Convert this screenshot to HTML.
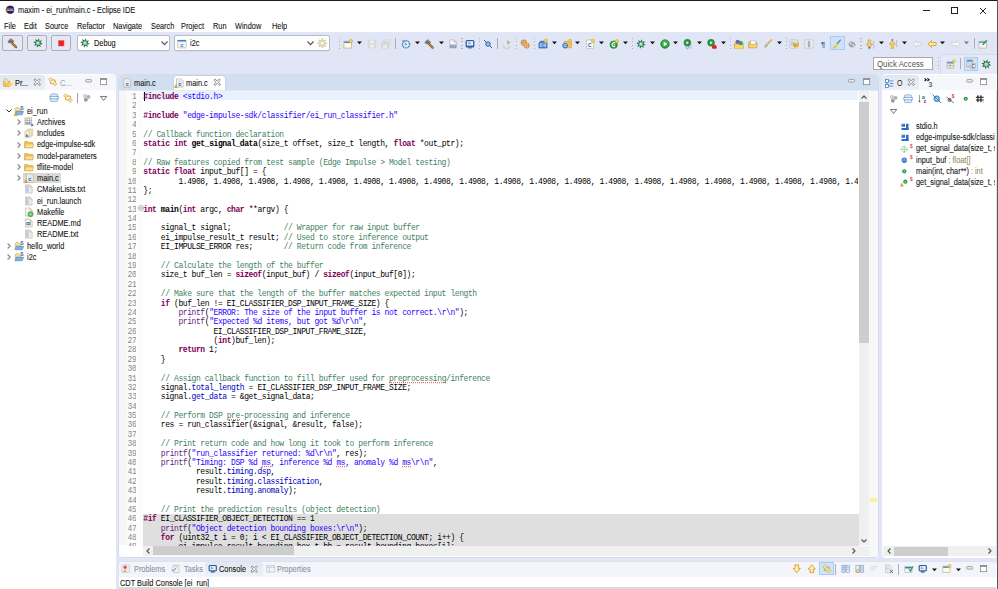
<!DOCTYPE html>
<html><head><meta charset="utf-8">
<style>
*{box-sizing:border-box}
html,body{margin:0;padding:0}
body{width:998px;height:589px;overflow:hidden;position:relative;background:#e1e6f6;font-family:"Liberation Sans",sans-serif;color:#000}
.a{position:absolute}
svg.a{overflow:visible}
.t{white-space:nowrap;line-height:10px;height:10px;-webkit-text-stroke:0.08px currentColor;transform:scaleX(0.88);transform-origin:0 0}
#code{left:143.3px;top:92.1px;width:715px;height:453.5px;overflow:hidden}
.ln{position:absolute;left:0;height:9.383px;line-height:9.383px;white-space:pre;font-family:"Liberation Mono",monospace;font-size:8px;letter-spacing:-0.414px;color:#000;transform:scaleY(1.1);transform-origin:0 7px}
.nm{position:absolute;right:0;width:20px;text-align:right;height:9.383px;line-height:9.383px;font-family:"Liberation Mono",monospace;font-size:8px;letter-spacing:-0.414px;color:#8a8a8a;transform:scaleY(1.1);transform-origin:0 7px}
#nums{left:115.3px;top:92.1px;width:21px;height:453.5px;overflow:hidden}
b.k{color:#7f0055;font-weight:bold}
b.d{font-weight:bold}
i.c{color:#3f7f5f;font-style:normal}
.s{color:#2a00ff}
.f{color:#0000c0}
.m{color:#642880}
u{text-decoration:none;background:repeating-linear-gradient(90deg,#e86060 0 1px,transparent 1px 2px) 0 100%/100% 1px no-repeat}
</style></head><body>
<div class="a" style="left:0px;top:0px;width:998px;height:1px;background:#1e1e1e"></div>
<div class="a" style="left:0px;top:1px;width:997px;height:30.5px;background:#fff"></div>
<div class="a" style="left:0px;top:74px;width:116px;height:515px;background:#fff;border-radius:0 4px 0 0"></div>
<div class="a" style="left:0px;top:74.5px;width:116px;height:15.5px;background:#f5f7fb;border-radius:0 4px 0 0"></div>
<div class="a" style="left:0px;top:74.5px;width:45px;height:15.5px;background:linear-gradient(#e1e8f0,#edf1f6);border-radius:0 4px 0 0"></div>
<svg class="a" style="left:2.50px;top:77.00px;" width="10.00" height="10.00" viewBox="0 0 16 16"><path d="M1 7H11V15H1Z" fill="#f5c84a" stroke="#c48f1c" stroke-width="0.8"/><path d="M0.5 5L3 2L8 4.5L9 9L5 12Z" fill="#f3d8a8" stroke="#b89050" stroke-width="0.5"/><path d="M7 14L10 10H15.5L14 14Z" fill="#ffd45a"/></svg>
<div class="a t" style="left:15px;top:77.59px;font-size:8.4px;color:#111;">Pr...</div>
<svg class="a" style="left:33.80px;top:78.80px;" width="6.40" height="6.40" viewBox="0 0 8 8"><path d="M1.3 1.3L6.7 6.7M6.7 1.3L1.3 6.7" stroke="#7a7a7a" stroke-width="2.7" stroke-linecap="square"/><path d="M1.3 1.3L6.7 6.7M6.7 1.3L1.3 6.7" stroke="#fcfcfc" stroke-width="1.3" stroke-linecap="square"/></svg>
<svg class="a" style="left:47.75px;top:77.25px;" width="9.50" height="9.50" viewBox="0 0 16 16"><path d="M5 5H12V9M11 11H4V7" stroke="#d9a235" stroke-width="1.6" fill="none"/><path d="M4.5 1L8 4.5L4.5 8L1 4.5Z" fill="#fbe3a0" stroke="#d49a2a" stroke-width="1"/><path d="M11.5 8L15 11.5L11.5 15L8 11.5Z" fill="#fbe3a0" stroke="#d49a2a" stroke-width="1"/></svg>
<div class="a t" style="left:60px;top:77.59px;font-size:8.4px;color:#a4abb8;">C...</div>
<svg class="a" style="left:84.90px;top:78.70px;" width="7.20" height="3.60" viewBox="0 0 8 4"><rect x="0.5" y="0.5" width="7" height="3" rx="1.5" fill="#e9e9e9" stroke="#8a8a8a" stroke-width="0.8"/></svg>
<svg class="a" style="left:99.90px;top:77.60px;" width="7.20" height="7.20" viewBox="0 0 8 8"><rect x="0.6" y="0.6" width="6.8" height="6.8" fill="#fff" stroke="#8a8a8a" stroke-width="0.9"/><rect x="0.6" y="0.6" width="6.8" height="1.5" fill="#8a8a8a"/></svg>
<svg class="a" style="left:48.75px;top:93.25px;" width="9.50" height="9.50" viewBox="0 0 16 16"><rect x="2.5" y="1.5" width="12" height="13" rx="2" fill="#dbe7f6" stroke="#6f9bd0" stroke-width="1.1"/><rect x="1.5" y="6.2" width="14" height="3.6" fill="#fff" stroke="#4f86c8" stroke-width="1"/></svg>
<svg class="a" style="left:63.00px;top:93.00px;" width="10.00" height="10.00" viewBox="0 0 16 16"><path d="M5 5H12V9M11 11H4V7" stroke="#d9a235" stroke-width="1.6" fill="none"/><path d="M4.5 1L8 4.5L4.5 8L1 4.5Z" fill="#fbe3a0" stroke="#d49a2a" stroke-width="1"/><path d="M11.5 8L15 11.5L11.5 15L8 11.5Z" fill="#fbe3a0" stroke="#d49a2a" stroke-width="1"/></svg>
<div class="a" style="left:76.5px;top:92.5px;width:1px;height:10px;background:#9aa0aa"></div>
<svg class="a" style="left:82.25px;top:93.25px;" width="9.50" height="9.50" viewBox="0 0 16 16"><circle cx="5" cy="5" r="3.3" fill="#c4c4c4"/><circle cx="11" cy="6.5" r="3.3" fill="#b0b0b0"/><circle cx="6.5" cy="11.5" r="3.3" fill="#9c9c9c"/><circle cx="4.5" cy="4.5" r="1.2" fill="#e8e8e8"/></svg>
<svg class="a" style="left:99.90px;top:95.80px;" width="7.20" height="5.40" viewBox="0 0 8 6"><path d="M0.5 0.5H7.5L4 5Z" fill="#fff" stroke="#555" stroke-width="0.9"/></svg>
<svg class="a" style="left:5.5px;top:108.90px" width="6" height="4" viewBox="0 0 6 4"><path d="M0.5 0.5L3 3L5.5 0.5" stroke="#333" stroke-width="1" fill="none"/></svg>
<svg class="a" style="left:13.80px;top:105.70px;" width="10.00" height="10.00" viewBox="0 0 16 16"><path d="M2 4.5C2 3 3 2.5 4.5 2.5H7L8.5 4H11V10H2Z" fill="#f6dc8e" stroke="#c9a040" stroke-width="0.8"/><path d="M1.5 14L3.5 8.5H15.5L13 14Z" fill="#7fb0ea" stroke="#3a70c0" stroke-width="0.8"/><text x="12.5" y="6.5" font-family="Liberation Sans" font-weight="bold" font-size="8" fill="#2a6ab8" text-anchor="middle">S</text><path d="M0.3 15.7L2.8 10.5L5.3 15.7Z" fill="#eab020" stroke="#b07810" stroke-width="0.5"/></svg>
<div class="a t" style="left:26.6px;top:105.59px;font-size:8.4px;color:#111;">ei_run</div>
<svg class="a" style="left:17.00px;top:119.15px" width="4" height="6" viewBox="0 0 4 6"><path d="M0.6 0.5L3.2 3L0.6 5.5" stroke="#8a8a8a" stroke-width="1.15" fill="none"/></svg>
<svg class="a" style="left:24.30px;top:116.95px;" width="10.00" height="10.00" viewBox="0 0 16 16"><rect x="1.5" y="1.5" width="11" height="11" fill="#f0f0f0" stroke="#b09a70" stroke-width="0.8"/><path d="M1.5 5.5H12.5M1.5 9H12.5M5 1.5V12.5M8.8 1.5V12.5" stroke="#8a8a8a" stroke-width="0.8"/><path d="M2 10H12" stroke="#6b90c8" stroke-width="1.4"/><rect x="11" y="11" width="4" height="4" fill="#4f86d0" stroke="#fff" stroke-width="0.6"/></svg>
<div class="a t" style="left:37.1px;top:116.84px;font-size:8.4px;color:#111;">Archives</div>
<svg class="a" style="left:17.00px;top:130.40px" width="4" height="6" viewBox="0 0 4 6"><path d="M0.6 0.5L3.2 3L0.6 5.5" stroke="#8a8a8a" stroke-width="1.15" fill="none"/></svg>
<svg class="a" style="left:24.30px;top:128.20px;" width="10.00" height="10.00" viewBox="0 0 16 16"><rect x="7" y="1.5" width="7" height="11" rx="1" fill="#f6f0e0" stroke="#c9a860" stroke-width="0.8"/><rect x="4.5" y="3" width="7" height="11" rx="1" fill="#f6f0e0" stroke="#c9a860" stroke-width="0.8"/><rect x="1.5" y="4.5" width="7" height="11" rx="1" fill="#f6f0e0" stroke="#c9a860" stroke-width="0.8"/><path d="M2.5 14L4 9L7.5 14Z" fill="#3a6ab0"/></svg>
<div class="a t" style="left:37.1px;top:128.09px;font-size:8.4px;color:#111;">Includes</div>
<svg class="a" style="left:17.00px;top:141.65px" width="4" height="6" viewBox="0 0 4 6"><path d="M0.6 0.5L3.2 3L0.6 5.5" stroke="#8a8a8a" stroke-width="1.15" fill="none"/></svg>
<svg class="a" style="left:24.30px;top:139.45px;" width="10.00" height="10.00" viewBox="0 0 16 16"><path d="M1 4H6L7 5.5H14V14H1Z" fill="#f0c460" stroke="#c48f1c" stroke-width="0.8"/><path d="M1 14L3 8H15.5L13.5 14Z" fill="#fbe09a" stroke="#c48f1c" stroke-width="0.6"/></svg>
<div class="a t" style="left:37.1px;top:139.34px;font-size:8.4px;color:#111;">edge-impulse-sdk</div>
<svg class="a" style="left:17.00px;top:152.90px" width="4" height="6" viewBox="0 0 4 6"><path d="M0.6 0.5L3.2 3L0.6 5.5" stroke="#8a8a8a" stroke-width="1.15" fill="none"/></svg>
<svg class="a" style="left:24.30px;top:150.70px;" width="10.00" height="10.00" viewBox="0 0 16 16"><path d="M1 4H6L7 5.5H14V14H1Z" fill="#f0c460" stroke="#c48f1c" stroke-width="0.8"/><path d="M1 14L3 8H15.5L13.5 14Z" fill="#fbe09a" stroke="#c48f1c" stroke-width="0.6"/></svg>
<div class="a t" style="left:37.1px;top:150.59px;font-size:8.4px;color:#111;">model-parameters</div>
<svg class="a" style="left:17.00px;top:164.15px" width="4" height="6" viewBox="0 0 4 6"><path d="M0.6 0.5L3.2 3L0.6 5.5" stroke="#8a8a8a" stroke-width="1.15" fill="none"/></svg>
<svg class="a" style="left:24.30px;top:161.95px;" width="10.00" height="10.00" viewBox="0 0 16 16"><path d="M1 4H6L7 5.5H14V14H1Z" fill="#f0c460" stroke="#c48f1c" stroke-width="0.8"/><path d="M1 14L3 8H15.5L13.5 14Z" fill="#fbe09a" stroke="#c48f1c" stroke-width="0.6"/></svg>
<div class="a t" style="left:37.1px;top:161.84px;font-size:8.4px;color:#111;">tflite-model</div>
<div class="a" style="left:22.6px;top:172.8px;width:38.3px;height:10.5px;background:#d9d9d9"></div>
<svg class="a" style="left:17.00px;top:175.40px" width="4" height="6" viewBox="0 0 4 6"><path d="M0.6 0.5L3.2 3L0.6 5.5" stroke="#8a8a8a" stroke-width="1.15" fill="none"/></svg>
<svg class="a" style="left:24.30px;top:173.20px;" width="10.00" height="10.00" viewBox="0 0 16 16"><path d="M4 1.5H11.5L14.5 4.5V14.5H4Z" fill="#fff" stroke="#b9a06a" stroke-width="1"/><path d="M6 3H13V13H6Z" fill="#dfe9f5"/><text x="9.3" y="12" font-family="Liberation Sans" font-weight="bold" font-size="9" fill="#2a52b8" text-anchor="middle">c</text><path d="M0.5 15.5L3 10.5L5.5 15.5Z" fill="#e8a920" stroke="#b07810" stroke-width="0.5"/></svg>
<div class="a t" style="left:37.1px;top:173.09px;font-size:8.4px;color:#111;">main.c</div>
<svg class="a" style="left:24.30px;top:184.45px;" width="10.00" height="10.00" viewBox="0 0 16 16"><path d="M2.5 1.5H9.5L13 5V14.5H2.5Z" fill="#e9eff8" stroke="#b9a884" stroke-width="0.9"/><rect x="3.2" y="2.2" width="4.5" height="11.6" fill="#bccfe9"/><path d="M9.5 1.5V5H13" fill="#f3e2b0" stroke="#c9a860" stroke-width="0.7"/></svg>
<div class="a t" style="left:37.1px;top:184.34px;font-size:8.4px;color:#111;">CMakeLists.txt</div>
<svg class="a" style="left:24.30px;top:195.70px;" width="10.00" height="10.00" viewBox="0 0 16 16"><path d="M2.5 1.5H9.5L13 5V14.5H2.5Z" fill="#e9eff8" stroke="#b9a884" stroke-width="0.9"/><rect x="3.2" y="2.2" width="4.5" height="11.6" fill="#bccfe9"/><path d="M9.5 1.5V5H13" fill="#f3e2b0" stroke="#c9a860" stroke-width="0.7"/></svg>
<div class="a t" style="left:37.1px;top:195.59px;font-size:8.4px;color:#111;">ei_run.launch</div>
<svg class="a" style="left:24.30px;top:206.95px;" width="10.00" height="10.00" viewBox="0 0 16 16"><path d="M2.5 1.5H9.5L13 5V14.5H2.5Z" fill="#f4f6fa" stroke="#b9a884" stroke-width="0.9"/><path d="M9.5 1.5V5H13" fill="#f3e2b0" stroke="#c9a860" stroke-width="0.7"/><circle cx="10.5" cy="11.5" r="4.3" fill="#5cb877" stroke="#3a9050" stroke-width="0.6"/><circle cx="10.5" cy="11.5" r="1.6" fill="#b8e4c4"/></svg>
<div class="a t" style="left:37.1px;top:206.84px;font-size:8.4px;color:#111;">Makefile</div>
<svg class="a" style="left:24.30px;top:218.20px;" width="10.00" height="10.00" viewBox="0 0 16 16"><path d="M2.5 1.5H9.5L13 5V14.5H2.5Z" fill="#f6f6f0" stroke="#b9a070" stroke-width="0.9"/><path d="M9.5 1.5V5H13" fill="#f3e2b0" stroke="#c9a860" stroke-width="0.7"/><rect x="4" y="6.5" width="6.5" height="5" fill="#4f7fc0"/><path d="M5 8L6.5 10L8 8L9.5 10" stroke="#dce8f6" stroke-width="0.8" fill="none"/></svg>
<div class="a t" style="left:37.1px;top:218.09px;font-size:8.4px;color:#111;">README.md</div>
<svg class="a" style="left:24.30px;top:229.45px;" width="10.00" height="10.00" viewBox="0 0 16 16"><path d="M2.5 1.5H9.5L13 5V14.5H2.5Z" fill="#e9eff8" stroke="#b9a884" stroke-width="0.9"/><rect x="3.2" y="2.2" width="4.5" height="11.6" fill="#bccfe9"/><path d="M9.5 1.5V5H13" fill="#f3e2b0" stroke="#c9a860" stroke-width="0.7"/></svg>
<div class="a t" style="left:37.1px;top:229.34px;font-size:8.4px;color:#111;">README.txt</div>
<svg class="a" style="left:6.50px;top:242.90px" width="4" height="6" viewBox="0 0 4 6"><path d="M0.6 0.5L3.2 3L0.6 5.5" stroke="#8a8a8a" stroke-width="1.15" fill="none"/></svg>
<svg class="a" style="left:13.80px;top:240.70px;" width="10.00" height="10.00" viewBox="0 0 16 16"><path d="M2 4.5C2 3 3 2.5 4.5 2.5H7L8.5 4H11V10H2Z" fill="#f6dc8e" stroke="#c9a040" stroke-width="0.8"/><path d="M1.5 14L3.5 8.5H15.5L13 14Z" fill="#7fb0ea" stroke="#3a70c0" stroke-width="0.8"/><text x="12.5" y="6.5" font-family="Liberation Sans" font-weight="bold" font-size="8" fill="#2a6ab8" text-anchor="middle">S</text></svg>
<div class="a t" style="left:26.6px;top:240.59px;font-size:8.4px;color:#111;">hello_world</div>
<svg class="a" style="left:6.50px;top:254.15px" width="4" height="6" viewBox="0 0 4 6"><path d="M0.6 0.5L3.2 3L0.6 5.5" stroke="#8a8a8a" stroke-width="1.15" fill="none"/></svg>
<svg class="a" style="left:13.80px;top:251.95px;" width="10.00" height="10.00" viewBox="0 0 16 16"><path d="M2 4.5C2 3 3 2.5 4.5 2.5H7L8.5 4H11V10H2Z" fill="#f6dc8e" stroke="#c9a040" stroke-width="0.8"/><path d="M1.5 14L3.5 8.5H15.5L13 14Z" fill="#7fb0ea" stroke="#3a70c0" stroke-width="0.8"/><text x="12.5" y="6.5" font-family="Liberation Sans" font-weight="bold" font-size="8" fill="#2a6ab8" text-anchor="middle">S</text></svg>
<div class="a t" style="left:26.6px;top:251.84px;font-size:8.4px;color:#111;">i2c</div>
<div class="a" style="left:118px;top:74px;width:761px;height:484px;background:#fff;border:1px solid #d6dce9;border-radius:4px"></div>
<div class="a" style="left:119px;top:75px;width:759px;height:15px;background:#d1dff0;border-radius:3px 3px 0 0"></div>
<div class="a" style="left:173px;top:74.5px;width:52.5px;height:15.5px;background:#fff;border-radius:4px 4px 0 0;border:1px solid #c9d3e6;border-bottom:none"></div>
<svg class="a" style="left:121.50px;top:77.50px;" width="10.00" height="10.00" viewBox="0 0 16 16"><path d="M3 1.5H10.5L13.5 4.5V14.5H3Z" fill="#fff" stroke="#b9a06a" stroke-width="1"/><path d="M5 3H12V13H5Z" fill="#dfe9f5"/><text x="8.3" y="12" font-family="Liberation Sans" font-weight="bold" font-size="9" fill="#2a52b8" text-anchor="middle">c</text></svg>
<div class="a t" style="left:133.6px;top:77.89px;font-size:8.4px;color:#111;">main.c</div>
<svg class="a" style="left:174.00px;top:77.50px;" width="10.00" height="10.00" viewBox="0 0 16 16"><path d="M4 1.5H11.5L14.5 4.5V14.5H4Z" fill="#fff" stroke="#b9a06a" stroke-width="1"/><path d="M6 3H13V13H6Z" fill="#dfe9f5"/><text x="9.3" y="12" font-family="Liberation Sans" font-weight="bold" font-size="9" fill="#2a52b8" text-anchor="middle">c</text><path d="M0.5 15.5L3 10.5L5.5 15.5Z" fill="#e8a920" stroke="#b07810" stroke-width="0.5"/></svg>
<div class="a t" style="left:186.4px;top:77.89px;font-size:8.4px;color:#111;">main.c</div>
<svg class="a" style="left:214.10px;top:79.30px;" width="6.40" height="6.40" viewBox="0 0 8 8"><path d="M1.3 1.3L6.7 6.7M6.7 1.3L1.3 6.7" stroke="#7a7a7a" stroke-width="2.7" stroke-linecap="square"/><path d="M1.3 1.3L6.7 6.7M6.7 1.3L1.3 6.7" stroke="#fcfcfc" stroke-width="1.3" stroke-linecap="square"/></svg>
<svg class="a" style="left:848.40px;top:78.70px;" width="7.20" height="3.60" viewBox="0 0 8 4"><rect x="0.5" y="0.5" width="7" height="3" rx="1.5" fill="#e9e9e9" stroke="#8a8a8a" stroke-width="0.8"/></svg>
<svg class="a" style="left:862.80px;top:77.60px;" width="7.20" height="7.20" viewBox="0 0 8 8"><rect x="0.6" y="0.6" width="6.8" height="6.8" fill="#fff" stroke="#8a8a8a" stroke-width="0.9"/><rect x="0.6" y="0.6" width="6.8" height="1.5" fill="#8a8a8a"/></svg>
<div class="a" style="left:119px;top:90px;width:759px;height:1px;background:#e4e9f2"></div>
<div class="a" style="left:119px;top:91px;width:8px;height:454px;background:#f6f6f6"></div>
<div class="a" style="left:127px;top:91px;width:15.5px;height:454px;background:#fcfcfc"></div>
<div class="a" style="left:143px;top:91.3px;width:715px;height:9px;background:#e8f2fe"></div>
<div class="a" style="left:143px;top:513.5px;width:715.5px;height:32px;background:#dfdfdf"></div>
<div class="a" style="left:859px;top:91px;width:10px;height:454px;background:#f0f0f0"></div>
<div class="a" style="left:859px;top:102px;width:10px;height:241px;background:#cdcdcd"></div>
<svg class="a" style="left:861px;top:95px" width="6" height="4" viewBox="0 0 6 4"><path d="M0.5 3.5L3 1L5.5 3.5" stroke="#505050" stroke-width="1.1" fill="none"/></svg>
<svg class="a" style="left:861px;top:538.5px" width="6" height="4" viewBox="0 0 6 4"><path d="M0.5 0.5L3 3L5.5 0.5" stroke="#505050" stroke-width="1.1" fill="none"/></svg>
<div class="a" style="left:869px;top:91px;width:9px;height:466px;background:#f8f8f8"></div>
<div class="a" style="left:870px;top:498.3px;width:6.5px;height:3.4px;background:#f6f19a"></div>
<div class="a" style="left:143px;top:545.5px;width:726px;height:10px;background:#f0f0f0"></div>
<div class="a" style="left:153px;top:546px;width:141px;height:9px;background:#cdcdcd"></div>
<svg class="a" style="left:145.5px;top:548px" width="4" height="6" viewBox="0 0 4 6"><path d="M3.5 0.5L1 3L3.5 5.5" stroke="#505050" stroke-width="1.1" fill="none"/></svg>
<svg class="a" style="left:851.5px;top:548px" width="4" height="6" viewBox="0 0 4 6"><path d="M0.5 0.5L3 3L0.5 5.5" stroke="#505050" stroke-width="1.1" fill="none"/></svg>
<div class="a" style="left:144px;top:91.6px;width:1px;height:9px;background:#000"></div>
<svg class="a" style="left:137.5px;top:205px" width="6" height="6" viewBox="0 0 6 6"><circle cx="3" cy="3" r="2.5" fill="#fff" stroke="#8a9ab0" stroke-width="0.7"/><path d="M1.5 3H4.5" stroke="#555" stroke-width="0.7"/></svg>
<div class="a" id="nums">
<div class=nm style="top:0.00px">1</div>
<div class=nm style="top:9.38px">2</div>
<div class=nm style="top:18.77px">3</div>
<div class=nm style="top:28.15px">4</div>
<div class=nm style="top:37.53px">5</div>
<div class=nm style="top:46.91px">6</div>
<div class=nm style="top:56.30px">7</div>
<div class=nm style="top:65.68px">8</div>
<div class=nm style="top:75.06px">9</div>
<div class=nm style="top:84.45px">10</div>
<div class=nm style="top:93.83px">11</div>
<div class=nm style="top:103.21px">12</div>
<div class=nm style="top:112.60px">13</div>
<div class=nm style="top:121.98px">14</div>
<div class=nm style="top:131.36px">15</div>
<div class=nm style="top:140.74px">16</div>
<div class=nm style="top:150.13px">17</div>
<div class=nm style="top:159.51px">18</div>
<div class=nm style="top:168.89px">19</div>
<div class=nm style="top:178.28px">20</div>
<div class=nm style="top:187.66px">21</div>
<div class=nm style="top:197.04px">22</div>
<div class=nm style="top:206.43px">23</div>
<div class=nm style="top:215.81px">24</div>
<div class=nm style="top:225.19px">25</div>
<div class=nm style="top:234.57px">26</div>
<div class=nm style="top:243.96px">27</div>
<div class=nm style="top:253.34px">28</div>
<div class=nm style="top:262.72px">29</div>
<div class=nm style="top:272.11px">30</div>
<div class=nm style="top:281.49px">31</div>
<div class=nm style="top:290.87px">32</div>
<div class=nm style="top:300.26px">33</div>
<div class=nm style="top:309.64px">34</div>
<div class=nm style="top:319.02px">35</div>
<div class=nm style="top:328.40px">36</div>
<div class=nm style="top:337.79px">37</div>
<div class=nm style="top:347.17px">38</div>
<div class=nm style="top:356.55px">39</div>
<div class=nm style="top:365.94px">40</div>
<div class=nm style="top:375.32px">41</div>
<div class=nm style="top:384.70px">42</div>
<div class=nm style="top:394.09px">43</div>
<div class=nm style="top:403.47px">44</div>
<div class=nm style="top:412.85px">45</div>
<div class=nm style="top:422.23px">46</div>
<div class=nm style="top:431.62px">47</div>
<div class=nm style="top:441.00px">48</div>
<div class=nm style="top:450.38px">49</div>
</div>
<div class="a" id="code">
<div class=ln style="top:0.00px"><b class=k>#include</b> <span class=s>&lt;stdio.h&gt;</span></div>
<div class=ln style="top:9.38px"></div>
<div class=ln style="top:18.77px"><b class=k>#include</b> <span class=s>"edge-impulse-sdk/classifier/ei_run_classifier.h"</span></div>
<div class=ln style="top:28.15px"></div>
<div class=ln style="top:37.53px"><i class=c>// Callback function declaration</i></div>
<div class=ln style="top:46.91px"><b class=k>static</b> <b class=k>int</b> <b class=d>get_signal_data</b>(size_t offset, size_t length, <b class=k>float</b> *out_ptr);</div>
<div class=ln style="top:56.30px"></div>
<div class=ln style="top:65.68px"><i class=c>// Raw features copied from test sample (Edge Impulse &gt; Model testing)</i></div>
<div class=ln style="top:75.06px"><b class=k>static</b> <b class=k>float</b> input_buf[] = {</div>
<div class=ln style="top:84.45px">        1.4908, 1.4908, 1.4908, 1.4908, 1.4908, 1.4908, 1.4908, 1.4908, 1.4908, 1.4908, 1.4908, 1.4908, 1.4908, 1.4908, 1.4908, 1.4908, 1.4908, 1.4908, 1.4908, 1.4908, 1.4908, 1.4908, 1.4908, 1.4908, 1.4908, 1.4908, 1.4908, 1.4908, 1.4908, 1.4908, </div>
<div class=ln style="top:93.83px">};</div>
<div class=ln style="top:103.21px"></div>
<div class=ln style="top:112.60px"><b class=k>int</b> <b class=d>main</b>(<b class=k>int</b> argc, <b class=k>char</b> **argv) {</div>
<div class=ln style="top:121.98px"></div>
<div class=ln style="top:131.36px">    signal_t signal;            <i class=c>// Wrapper for raw input buffer</i></div>
<div class=ln style="top:140.74px">    ei_impulse_result_t result; <i class=c>// Used to store inference output</i></div>
<div class=ln style="top:150.13px">    EI_IMPULSE_ERROR res;       <i class=c>// Return code from inference</i></div>
<div class=ln style="top:159.51px"></div>
<div class=ln style="top:168.89px">    <i class=c>// Calculate the length of the buffer</i></div>
<div class=ln style="top:178.28px">    size_t buf_len = <b class=k>sizeof</b>(input_buf) / <b class=k>sizeof</b>(input_buf[0]);</div>
<div class=ln style="top:187.66px"></div>
<div class=ln style="top:197.04px">    <i class=c>// Make sure that the length of the buffer matches expected input length</i></div>
<div class=ln style="top:206.43px">    <b class=k>if</b> (buf_len != EI_CLASSIFIER_DSP_INPUT_FRAME_SIZE) {</div>
<div class=ln style="top:215.81px">        <span class=m>printf</span>(<span class=s>"ERROR: The size of the input buffer is not correct.\r\n"</span>);</div>
<div class=ln style="top:225.19px">        <span class=m>printf</span>(<span class=s>"Expected %d items, but got %d\r\n"</span>,</div>
<div class=ln style="top:234.57px">                EI_CLASSIFIER_DSP_INPUT_FRAME_SIZE,</div>
<div class=ln style="top:243.96px">                (<b class=k>int</b>)buf_len);</div>
<div class=ln style="top:253.34px">        <b class=k>return</b> 1;</div>
<div class=ln style="top:262.72px">    }</div>
<div class=ln style="top:272.11px"></div>
<div class=ln style="top:281.49px">    <i class=c>// Assign callback function to fill buffer used for <u>preprocessing</u>/inference</i></div>
<div class=ln style="top:290.87px">    signal.<span class=f>total_length</span> = EI_CLASSIFIER_DSP_INPUT_FRAME_SIZE;</div>
<div class=ln style="top:300.26px">    signal.<span class=f>get_data</span> = &amp;get_signal_data;</div>
<div class=ln style="top:309.64px"></div>
<div class=ln style="top:319.02px">    <i class=c>// Perform DSP <u>pre</u>-processing and inference</i></div>
<div class=ln style="top:328.40px">    res = run_classifier(&amp;signal, &amp;result, false);</div>
<div class=ln style="top:337.79px"></div>
<div class=ln style="top:347.17px">    <i class=c>// Print return code and how long it took to perform inference</i></div>
<div class=ln style="top:356.55px">    <span class=m>printf</span>(<span class=s>"run_classifier returned: %d\r\n"</span>, res);</div>
<div class=ln style="top:365.94px">    <span class=m>printf</span>(<span class=s>"Timing: DSP %d <u>ms</u>, inference %d <u>ms</u>, anomaly %d <u>ms</u>\r\n"</span>,</div>
<div class=ln style="top:375.32px">            result.<span class=f>timing</span>.<span class=f>dsp</span>,</div>
<div class=ln style="top:384.70px">            result.<span class=f>timing</span>.<span class=f>classification</span>,</div>
<div class=ln style="top:394.09px">            result.<span class=f>timing</span>.<span class=f>anomaly</span>);</div>
<div class=ln style="top:403.47px"></div>
<div class=ln style="top:412.85px">    <i class=c>// Print the prediction results (object detection)</i></div>
<div class=ln style="top:422.23px"><b class=k>#if</b> EI_CLASSIFIER_OBJECT_DETECTION == 1</div>
<div class=ln style="top:431.62px">    <span class=m>printf</span>(<span class=s>"Object detection bounding boxes:\r\n"</span>);</div>
<div class=ln style="top:441.00px">    <b class=k>for</b> (uint32_t i = 0; i &lt; EI_CLASSIFIER_OBJECT_DETECTION_COUNT; i++) {</div>
<div class=ln style="top:450.38px">        ei_impulse_result_bounding_box_t bb = result.bounding_boxes[i];</div>
</div>
<div class="a" style="left:882px;top:74px;width:115px;height:484px;background:#fff;border-radius:4px 0 0 4px"></div>
<div class="a" style="left:882px;top:74.5px;width:114px;height:15.5px;background:#f5f7fb;border-radius:4px 4px 0 0"></div>
<div class="a" style="left:882px;top:74.5px;width:37px;height:15.5px;background:linear-gradient(#e1e8f0,#edf1f6);border-radius:4px 4px 0 0"></div>
<svg class="a" style="left:884.90px;top:78.60px;" width="9.00" height="9.00" viewBox="0 0 16 16"><rect x="1" y="1" width="5" height="5" fill="#fff" stroke="#2a70c0" stroke-width="1.2"/><rect x="1" y="10" width="5" height="5" fill="#fff" stroke="#2a70c0" stroke-width="1.2"/><path d="M6 3.5H15M6 12.5H15M3.5 6V10M8 8H15" stroke="#2a70c0" stroke-width="1.3"/></svg>
<div class="a t" style="left:896.6px;top:77.65px;font-size:8.8px;color:#222;-webkit-text-stroke:0;transform:scaleX(0.8)">O</div>
<svg class="a" style="left:908.00px;top:79.30px;" width="6.40" height="6.40" viewBox="0 0 8 8"><path d="M1.3 1.3L6.7 6.7M6.7 1.3L1.3 6.7" stroke="#7a7a7a" stroke-width="2.7" stroke-linecap="square"/><path d="M1.3 1.3L6.7 6.7M6.7 1.3L1.3 6.7" stroke="#fcfcfc" stroke-width="1.3" stroke-linecap="square"/></svg>
<svg class="a" style="left:924px;top:78px" width="6" height="3.5" viewBox="0 0 6 3.5"><path d="M0.6 0.4L2.2 1.7L0.6 3M3.4 0.4L5 1.7L3.4 3" stroke="#111" stroke-width="1.1" fill="none"/></svg>
<div class="a t" style="left:928.4px;top:79.51px;font-size:6.6px;color:#333;transform:none">3</div>
<svg class="a" style="left:966.10px;top:78.70px;" width="7.20" height="3.60" viewBox="0 0 8 4"><rect x="0.5" y="0.5" width="7" height="3" rx="1.5" fill="#e9e9e9" stroke="#8a8a8a" stroke-width="0.8"/></svg>
<svg class="a" style="left:980.40px;top:77.60px;" width="7.20" height="7.20" viewBox="0 0 8 8"><rect x="0.6" y="0.6" width="6.8" height="6.8" fill="#fff" stroke="#8a8a8a" stroke-width="0.9"/><rect x="0.6" y="0.6" width="6.8" height="1.5" fill="#8a8a8a"/></svg>
<svg class="a" style="left:888.95px;top:93.55px;" width="9.50" height="9.50" viewBox="0 0 16 16"><circle cx="5" cy="5" r="3.3" fill="#c4c4c4"/><circle cx="11" cy="6.5" r="3.3" fill="#b0b0b0"/><circle cx="6.5" cy="11.5" r="3.3" fill="#9c9c9c"/><circle cx="4.5" cy="4.5" r="1.2" fill="#e8e8e8"/></svg>
<svg class="a" style="left:903.45px;top:93.55px;" width="9.50" height="9.50" viewBox="0 0 16 16"><rect x="2.5" y="1.5" width="12" height="13" rx="2" fill="#dbe7f6" stroke="#6f9bd0" stroke-width="1.1"/><rect x="1.5" y="6.2" width="14" height="3.6" fill="#fff" stroke="#4f86c8" stroke-width="1"/></svg>
<svg class="a" style="left:917.55px;top:93.55px;" width="9.50" height="9.50" viewBox="0 0 16 16"><path d="M2.5 1.5V13" stroke="#666" stroke-width="1"/><path d="M0.8 11.5L2.5 14.5L4.2 11.5Z" fill="#333"/><text x="9" y="8.2" font-family="Liberation Sans" font-weight="bold" font-size="10" fill="#2a8a7a" text-anchor="middle">a</text><text x="11.8" y="15.8" font-family="Liberation Sans" font-weight="bold" font-size="9.5" fill="#8a2a9a" text-anchor="middle">z</text></svg>
<svg class="a" style="left:932.25px;top:93.55px;" width="9.50" height="9.50" viewBox="0 0 16 16"><circle cx="8" cy="8" r="5" fill="#5ab0e8" stroke="#2a80c8" stroke-width="1"/><circle cx="8" cy="8" r="2" fill="#e8f4fc"/><path d="M1 1L15 15" stroke="#2f4c9a" stroke-width="1.3"/></svg>
<svg class="a" style="left:946.05px;top:93.55px;" width="9.50" height="9.50" viewBox="0 0 16 16"><circle cx="6" cy="10" r="3.5" fill="#8a8a8a"/><path d="M1 5L13 15" stroke="#2f4c9a" stroke-width="1.3"/><text x="12" y="7" font-family="Liberation Sans" font-weight="bold" font-size="8" fill="#e03050" text-anchor="middle">$</text></svg>
<svg class="a" style="left:960.55px;top:93.55px;" width="9.50" height="9.50" viewBox="0 0 16 16"><circle cx="8" cy="8" r="3.5" fill="#2e9a44"/><circle cx="8" cy="8" r="1.3" fill="#a8e0b0"/></svg>
<svg class="a" style="left:975.25px;top:93.55px;" width="9.50" height="9.50" viewBox="0 0 16 16"><path d="M5 2V14M10 2V14M1.5 5.5H14.5M1.5 10H14.5" stroke="#111" stroke-width="1.8"/><path d="M13 13L15 15" stroke="#555" stroke-width="0.8"/></svg>
<svg class="a" style="left:889.90px;top:109.10px;" width="7.20" height="5.40" viewBox="0 0 8 6"><path d="M0.5 0.5H7.5L4 5Z" fill="#fff" stroke="#555" stroke-width="0.9"/></svg>
<svg class="a" style="left:900.50px;top:122.80px;" width="8.00" height="8.00" viewBox="0 0 16 16"><rect x="1" y="1.5" width="7" height="6" fill="#2a6cc0"/><rect x="10" y="1.5" width="5" height="12.5" fill="#2a6cc0"/><rect x="1" y="10" width="14" height="4" fill="#2a6cc0"/><rect x="2" y="2.5" width="3" height="2" fill="#7fb0ea"/></svg>
<div class="a t" style="left:916px;top:121.29px;font-size:8.4px;color:#111;">stdio.h</div>
<svg class="a" style="left:900.50px;top:133.90px;" width="8.00" height="8.00" viewBox="0 0 16 16"><rect x="1" y="1.5" width="7" height="6" fill="#2a6cc0"/><rect x="10" y="1.5" width="5" height="12.5" fill="#2a6cc0"/><rect x="1" y="10" width="14" height="4" fill="#2a6cc0"/><rect x="2" y="2.5" width="3" height="2" fill="#7fb0ea"/></svg>
<div class="a t" style="left:916px;top:132.39px;font-size:8.4px;color:#111;">edge-impulse-sdk/classifier/ei_run_classifier.h</div>
<svg class="a" style="left:900.25px;top:144.75px;" width="8.50" height="8.50" viewBox="0 0 16 16"><rect x="2.5" y="3.5" width="11" height="9" rx="4" fill="none" stroke="#5cb85c" stroke-width="1.1" stroke-dasharray="1.6 1"/><path d="M8 1V15M1 8H15" stroke="#5cb85c" stroke-width="1"/></svg>
<div class="a t" style="left:909.5px;top:141.19px;font-size:5.5px;color:#e04060;">$</div>
<div class="a t" style="left:916px;top:143.49px;font-size:8.4px;color:#111;">get_signal_data(size_t, size_t, float*) : int</div>
<svg class="a" style="left:900.25px;top:155.85px;" width="8.50" height="8.50" viewBox="0 0 16 16"><circle cx="8" cy="8" r="5" fill="#3a78c8"/><path d="M3.5 8H12.5" stroke="#9cc4f0" stroke-width="1.2"/><circle cx="8" cy="6" r="2" fill="#9cc4f0" opacity="0.6"/></svg>
<div class="a t" style="left:909.5px;top:152.29px;font-size:5.5px;color:#e04060;">$</div>
<div class="a t" style="left:916px;top:154.59px;font-size:8.4px;color:#111;">input_buf<span style="color:#9a8a60"> : float[]</span></div>
<svg class="a" style="left:900.25px;top:166.95px;" width="8.50" height="8.50" viewBox="0 0 16 16"><circle cx="8" cy="8" r="4" fill="#2e9a44"/><circle cx="8" cy="8" r="1.5" fill="#a8e0b0"/></svg>
<div class="a t" style="left:916px;top:165.69px;font-size:8.4px;color:#111;">main(int, char**)<span style="color:#9a8a60"> : int</span></div>
<svg class="a" style="left:900.25px;top:178.05px;" width="8.50" height="8.50" viewBox="0 0 16 16"><circle cx="10" cy="7" r="4" fill="#2e9a44"/><circle cx="10" cy="7" r="1.5" fill="#a8e0b0"/><path d="M0.5 15.5L3.5 9.5L6.5 15.5Z" fill="#e8a920" stroke="#b07810" stroke-width="0.5"/></svg>
<div class="a t" style="left:909.5px;top:174.49px;font-size:5.5px;color:#e04060;">$</div>
<div class="a t" style="left:916px;top:176.79px;font-size:8.4px;color:#111;">get_signal_data(size_t, size_t, float*) : int</div>
<div class="a" style="left:995px;top:90px;width:1px;height:455px;background:#fff"></div>
<div class="a" style="left:996px;top:90px;width:1px;height:468px;background:#dde2ee"></div>
<div class="a" style="left:883px;top:546px;width:113px;height:10px;background:#f0f0f0"></div>
<div class="a" style="left:894px;top:546.5px;width:54px;height:9px;background:#cdcdcd"></div>
<svg class="a" style="left:887px;top:548px" width="4" height="6" viewBox="0 0 4 6"><path d="M3.5 0.5L1 3L3.5 5.5" stroke="#505050" stroke-width="1.1" fill="none"/></svg>
<svg class="a" style="left:988px;top:548px" width="4" height="6" viewBox="0 0 4 6"><path d="M0.5 0.5L3 3L0.5 5.5" stroke="#505050" stroke-width="1.1" fill="none"/></svg>
<div class="a" style="left:118px;top:561px;width:879px;height:40px;background:#fff;border:1px solid #dde2ee;border-radius:4px 4px 0 0;border-right:none"></div>
<div class="a" style="left:119px;top:562px;width:877px;height:14.5px;background:#f3f5fa;border-radius:3px 3px 0 0"></div>
<div class="a" style="left:205px;top:562px;width:57.5px;height:14px;background:linear-gradient(#e1e8f0,#edf1f6);border-radius:4px 4px 0 0"></div>
<svg class="a" style="left:120.75px;top:564.25px;" width="9.50" height="9.50" viewBox="0 0 16 16"><rect x="1.5" y="1.5" width="13" height="13" fill="#e8eef6" stroke="#aab8cc" stroke-width="0.8"/><circle cx="7" cy="5.5" r="2.8" fill="#e85050"/><path d="M3.5 13.5L6.5 8.5L9.5 13.5Z" fill="#f0b020"/></svg>
<div class="a t" style="left:133.7px;top:564.29px;font-size:8.4px;color:#8a92a0;">Problems</div>
<svg class="a" style="left:171.05px;top:564.25px;" width="9.50" height="9.50" viewBox="0 0 16 16"><rect x="3.5" y="2.5" width="10" height="12" fill="#eef2f8" stroke="#b0a880" stroke-width="0.8"/><rect x="6" y="1" width="5" height="3" fill="#d8d0b0"/><path d="M1 9L4 12L9 6" stroke="#4a8ad8" stroke-width="1.6" fill="none"/></svg>
<div class="a t" style="left:183.6px;top:564.29px;font-size:8.4px;color:#8a92a0;">Tasks</div>
<svg class="a" style="left:207.75px;top:564.25px;" width="9.50" height="9.50" viewBox="0 0 16 16"><rect x="1" y="1.5" width="14" height="11" rx="2.5" fill="#2a5ea8"/><rect x="3" y="3.5" width="10" height="7" fill="#eaf2fa"/><path d="M4.5 5.5H7.5M4.5 7.5H9" stroke="#444" stroke-width="0.8"/><rect x="5" y="12.5" width="6" height="2" fill="#2a5ea8"/></svg>
<div class="a t" style="left:218.7px;top:564.29px;font-size:8.4px;color:#111;">Console</div>
<svg class="a" style="left:251.30px;top:566.30px;" width="6.40" height="6.40" viewBox="0 0 8 8"><path d="M1.3 1.3L6.7 6.7M6.7 1.3L1.3 6.7" stroke="#7a7a7a" stroke-width="2.7" stroke-linecap="square"/><path d="M1.3 1.3L6.7 6.7M6.7 1.3L1.3 6.7" stroke="#fcfcfc" stroke-width="1.3" stroke-linecap="square"/></svg>
<svg class="a" style="left:265.75px;top:564.25px;" width="9.50" height="9.50" viewBox="0 0 16 16"><rect x="1.5" y="2.5" width="13" height="11" fill="#f4f6fa" stroke="#9aa8bc" stroke-width="0.8"/><path d="M1.5 5.5H14.5M5.5 5.5V13.5" stroke="#9aa8bc" stroke-width="0.8"/></svg>
<div class="a t" style="left:277.3px;top:564.29px;font-size:8.4px;color:#8a92a0;">Properties</div>
<div class="a" style="left:819.2px;top:562px;width:14.5px;height:13.4px;background:#cce4fb;border:1px solid #a6cdf2"></div>
<svg class="a" style="left:792.45px;top:564.25px;" width="9.50" height="9.50" viewBox="0 0 16 16"><path d="M5 1.5H11V7.5H14L8 14.5L2 7.5H5Z" fill="#fdeeb8" stroke="#d9a020" stroke-width="1.5"/></svg>
<svg class="a" style="left:806.95px;top:564.25px;" width="9.50" height="9.50" viewBox="0 0 16 16"><path d="M5 14.5H11V8.5H14L8 1.5L2 8.5H5Z" fill="#fdeeb8" stroke="#d9a020" stroke-width="1.5"/></svg>
<svg class="a" style="left:821.75px;top:564.25px;" width="9.50" height="9.50" viewBox="0 0 16 16"><path d="M5 5H12V9M11 11H4V7" stroke="#d9a235" stroke-width="1.6" fill="none"/><path d="M4.5 1L8 4.5L4.5 8L1 4.5Z" fill="#fbe3a0" stroke="#d49a2a" stroke-width="1"/><path d="M11.5 8L15 11.5L11.5 15L8 11.5Z" fill="#fbe3a0" stroke="#d49a2a" stroke-width="1"/></svg>
<div class="a" style="left:835.2px;top:564px;width:1px;height:11px;background:#a9adb8"></div>
<svg class="a" style="left:841.05px;top:564.25px;" width="9.50" height="9.50" viewBox="0 0 16 16"><rect x="1.5" y="2" width="6" height="12" fill="#c8d8ec" stroke="#6a8ac0" stroke-width="0.8"/><rect x="9" y="2" width="5.5" height="12" fill="#e8eef6" stroke="#6a8ac0" stroke-width="0.8"/><path d="M3 6H6M3 9H6M10.5 6H13M10.5 9H13" stroke="#4a6aa0" stroke-width="0.8"/></svg>
<svg class="a" style="left:854.95px;top:564.25px;" width="9.50" height="9.50" viewBox="0 0 16 16"><rect x="1.5" y="2" width="6" height="12" fill="#e8eef6" stroke="#6a8ac0" stroke-width="0.8"/><rect x="9" y="2" width="5.5" height="12" fill="#c8d8ec" stroke="#6a8ac0" stroke-width="0.8"/><circle cx="5" cy="12" r="2.8" fill="#f0d080" stroke="#c09030" stroke-width="0.8"/></svg>
<svg class="a" style="left:869.85px;top:564.25px;" width="9.50" height="9.50" viewBox="0 0 16 16"><path d="M3 4H13M3 7H10M3 10H8" stroke="#c8d4e4" stroke-width="1.2"/><path d="M2 3V11" stroke="#c8d4e4" stroke-width="1"/></svg>
<svg class="a" style="left:883.75px;top:564.25px;" width="9.50" height="9.50" viewBox="0 0 16 16"><path d="M2.5 1.5H9L12 4.5V14.5H2.5Z" fill="#eef2f6" stroke="#a0a8b8" stroke-width="0.8"/><path d="M4 5H9M4 7.5H9M4 10H8" stroke="#9aa8c0" stroke-width="0.8"/><path d="M10 10L15 15M15 10L10 15" stroke="#444" stroke-width="1.2"/></svg>
<div class="a" style="left:897.7px;top:564px;width:1px;height:11px;background:#a9adb8"></div>
<svg class="a" style="left:903.65px;top:564.25px;" width="9.50" height="9.50" viewBox="0 0 16 16"><rect x="1.5" y="4.5" width="12" height="10" fill="#f4f8fc" stroke="#8a9ab0" stroke-width="0.8"/><rect x="2" y="5" width="11" height="2.5" fill="#3a7ac0"/><path d="M8 9L11 12L15 4" stroke="#2aa040" stroke-width="2" fill="none"/></svg>
<svg class="a" style="left:917.95px;top:564.25px;" width="9.50" height="9.50" viewBox="0 0 16 16"><rect x="1" y="1.5" width="14" height="11" rx="2.5" fill="#2a5ea8"/><rect x="3" y="3.5" width="10" height="7" fill="#eaf2fa"/><path d="M4.5 5.5H7.5M4.5 7.5H9" stroke="#444" stroke-width="0.8"/><rect x="5" y="12.5" width="6" height="2" fill="#2a5ea8"/></svg>
<svg class="a" style="left:931.70px;top:567.70px;" width="5.40" height="3.60" viewBox="0 0 6 4"><path d="M0 0.5H5.5L2.75 3.5Z" fill="#111"/></svg>
<svg class="a" style="left:942.05px;top:564.25px;" width="9.50" height="9.50" viewBox="0 0 16 16"><rect x="1.5" y="3.5" width="12" height="11" fill="#fffbe8" stroke="#b8a878"/><rect x="2" y="4" width="11" height="2.5" fill="#3d8fd6"/><circle cx="12.5" cy="3.5" r="2.8" fill="#f5d35a" stroke="#c99a1a" stroke-width="0.8"/></svg>
<svg class="a" style="left:955.60px;top:567.70px;" width="5.40" height="3.60" viewBox="0 0 6 4"><path d="M0 0.5H5.5L2.75 3.5Z" fill="#111"/></svg>
<svg class="a" style="left:966.00px;top:565.70px;" width="7.20" height="3.60" viewBox="0 0 8 4"><rect x="0.5" y="0.5" width="7" height="3" rx="1.5" fill="#e9e9e9" stroke="#8a8a8a" stroke-width="0.8"/></svg>
<svg class="a" style="left:980.40px;top:565.40px;" width="7.20" height="7.20" viewBox="0 0 8 8"><rect x="0.6" y="0.6" width="6.8" height="6.8" fill="#fff" stroke="#8a8a8a" stroke-width="0.9"/><rect x="0.6" y="0.6" width="6.8" height="1.5" fill="#8a8a8a"/></svg>
<div class="a t" style="left:120.4px;top:578.09px;font-size:8.4px;color:#111;">CDT Build Console [ei_run]</div>
<div class="a" style="left:119px;top:587px;width:877px;height:2px;background:#d9d9d9"></div>
<svg class="a" style="left:4.55px;top:5.25px;" width="9.50" height="9.50" viewBox="0 0 16 16"><circle cx="8" cy="8" r="7.2" fill="#f29b25"/><circle cx="9" cy="8" r="6.6" fill="#2c2262"/><rect x="3.2" y="6.2" width="11.2" height="1.3" fill="#c4c4e4"/><rect x="3.2" y="8.5" width="11.2" height="1.3" fill="#c4c4e4"/><rect x="4" y="7.5" width="9.6" height="1" fill="#8a86b8"/></svg>
<div class="a t" style="left:18px;top:4.79px;font-size:8.4px;color:#111;">maxim - ei_run/main.c - Eclipse IDE</div>
<div class="a t" style="left:3.5px;top:21.09px;font-size:8.4px;color:#111;">File</div>
<div class="a t" style="left:24px;top:21.09px;font-size:8.4px;color:#111;">Edit</div>
<div class="a t" style="left:45px;top:21.09px;font-size:8.4px;color:#111;">Source</div>
<div class="a t" style="left:76.5px;top:21.09px;font-size:8.4px;color:#111;">Refactor</div>
<div class="a t" style="left:112.5px;top:21.09px;font-size:8.4px;color:#111;">Navigate</div>
<div class="a t" style="left:150.7px;top:21.09px;font-size:8.4px;color:#111;">Search</div>
<div class="a t" style="left:181.3px;top:21.09px;font-size:8.4px;color:#111;">Project</div>
<div class="a t" style="left:213px;top:21.09px;font-size:8.4px;color:#111;">Run</div>
<div class="a t" style="left:235px;top:21.09px;font-size:8.4px;color:#111;">Window</div>
<div class="a t" style="left:271.5px;top:21.09px;font-size:8.4px;color:#111;">Help</div>
<div class="a" style="left:923px;top:10px;width:6.5px;height:1px;background:#222"></div>
<div class="a" style="left:951px;top:7px;width:6.5px;height:6.5px;border:1px solid #222"></div>
<svg class="a" style="left:979px;top:6.5px" width="8" height="8" viewBox="0 0 8 8"><path d="M1 1L7 7M7 1L1 7" stroke="#222" stroke-width="1"/></svg>
<div class="a" style="left:2.2px;top:35.4px;width:20.400000000000002px;height:15.4px;border:1px solid #adadb4;border-radius:2px;background:#e6e9f4"></div>
<div class="a" style="left:27px;top:35.4px;width:20px;height:15.4px;border:1px solid #adadb4;border-radius:2px;background:#e6e9f4"></div>
<div class="a" style="left:51.2px;top:35.4px;width:20.099999999999994px;height:15.4px;border:1px solid #adadb4;border-radius:2px;background:#e6e9f4"></div>
<svg class="a" style="left:7.25px;top:37.75px;" width="10.50" height="10.50" viewBox="0 0 16 16"><path d="M6.5 6.5L13.8 13.8" stroke="#7a4a18" stroke-width="3.6" stroke-linecap="round"/><path d="M6.5 6.5L13.8 13.8" stroke="#c98a3e" stroke-width="2" stroke-linecap="round"/><path d="M0.8 5.2L5.2 0.8L7.2 1.2L11.2 5L8 8.4L5.8 6.2L3.2 8.2Z" fill="#6e6e6e"/><path d="M2 5L5.4 1.8L7 2.2L9.8 5" fill="none" stroke="#b4b4b4" stroke-width="0.9"/></svg>
<svg class="a" style="left:32.50px;top:38.20px;" width="10.00" height="10.00" viewBox="0 0 16 16"><path d="M15.74 9.57L11.32 10.23L12.36 14.58L8.77 11.93L6.43 15.74L5.77 11.32L1.42 12.36L4.07 8.77L0.26 6.43L4.68 5.77L3.64 1.42L7.23 4.07L9.57 0.26L10.23 4.68L14.58 3.64L11.93 7.23Z" fill="#24615e"/><circle cx="8" cy="8" r="4" fill="#3f9a5a"/><circle cx="8" cy="8.3" r="3" fill="#8fd67a"/><circle cx="7.4" cy="7.5" r="1.4" fill="#e4f8d8"/></svg>
<svg class="a" style="left:56.25px;top:38.25px;" width="10.50" height="10.50" viewBox="0 0 16 16"><rect x="3" y="3" width="10" height="10" rx="1" fill="#f59a9a"/><rect x="4" y="4" width="8" height="8" fill="#e8202a"/></svg>
<div class="a" style="left:77.3px;top:35.4px;width:93.2px;height:15.8px;border:1px solid #b9bcc6;border-radius:2px;background:#fff;box-shadow:0 0.6px 0 #cfd3de"></div>
<svg class="a" style="left:80.00px;top:38.00px;" width="10.00" height="10.00" viewBox="0 0 16 16"><path d="M15.74 9.57L11.32 10.23L12.36 14.58L8.77 11.93L6.43 15.74L5.77 11.32L1.42 12.36L4.07 8.77L0.26 6.43L4.68 5.77L3.64 1.42L7.23 4.07L9.57 0.26L10.23 4.68L14.58 3.64L11.93 7.23Z" fill="#24615e"/><circle cx="8" cy="8" r="4" fill="#3f9a5a"/><circle cx="8" cy="8.3" r="3" fill="#8fd67a"/><circle cx="7.4" cy="7.5" r="1.4" fill="#e4f8d8"/></svg>
<div class="a t" style="left:93.6px;top:38.09px;font-size:8.4px;color:#111;">Debug</div>
<svg class="a" style="left:161px;top:41px" width="7" height="4.5" viewBox="0 0 7 4.5"><path d="M0.5 0.5L3.5 3.7L6.5 0.5" stroke="#555" stroke-width="1.15" fill="none"/></svg>
<div class="a" style="left:174px;top:35.4px;width:156px;height:15.8px;border:1px solid #b9bcc6;border-radius:2px;background:#fff;box-shadow:0 0.6px 0 #cfd3de"></div>
<svg class="a" style="left:177.20px;top:38.50px;" width="9.80" height="9.80" viewBox="0 0 16 16"><rect x="1" y="2" width="14" height="12.5" rx="1" fill="#eef6fc" stroke="#c4ac78" stroke-width="1"/><rect x="1" y="1.5" width="14" height="2.6" rx="1" fill="#3a7ed0"/><text x="8" y="12.3" font-family="Liberation Sans" font-weight="bold" font-size="9" fill="#2f6cb8" text-anchor="middle">c</text></svg>
<div class="a t" style="left:190px;top:38.09px;font-size:8.4px;color:#111;">i2c</div>
<svg class="a" style="left:307px;top:41px" width="7" height="4.5" viewBox="0 0 7 4.5"><path d="M0.5 0.5L3.5 3.7L6.5 0.5" stroke="#555" stroke-width="1.15" fill="none"/></svg>
<svg class="a" style="left:316.75px;top:37.55px;" width="10.50" height="10.50" viewBox="0 0 16 16"><g stroke="#d6cfa6" stroke-width="2.6" stroke-linecap="butt"><path d="M8 0.5V15.5M0.5 8H15.5M2.7 2.7L13.3 13.3M13.3 2.7L2.7 13.3"/></g><circle cx="8" cy="8" r="4.8" fill="#dcd5ae"/><circle cx="8" cy="8" r="2.1" fill="#fff"/></svg>
<div class="a" style="left:829.5px;top:36px;width:15px;height:13.5px;background:#cce4fb;border:1px solid #a6cdf2"></div>
<div class="a" style="left:338.9px;top:38.0px;width:1.3px;height:1.2px;background:#b4b0a6"></div>
<div class="a" style="left:338.9px;top:41.266666666666666px;width:1.3px;height:1.2px;background:#b4b0a6"></div>
<div class="a" style="left:338.9px;top:44.53333333333333px;width:1.3px;height:1.2px;background:#b4b0a6"></div>
<div class="a" style="left:338.9px;top:47.8px;width:1.3px;height:1.2px;background:#b4b0a6"></div>
<svg class="a" style="left:343.20px;top:38.60px;" width="10.00" height="10.00" viewBox="0 0 16 16"><rect x="1.5" y="3.5" width="12" height="11" fill="#fffbe8" stroke="#b8a878"/><rect x="2" y="4" width="11" height="2.5" fill="#3d8fd6"/><circle cx="12.5" cy="3.5" r="2.8" fill="#f5d35a" stroke="#c99a1a" stroke-width="0.8"/></svg>
<svg class="a" style="left:357.00px;top:41.30px;" width="5.40" height="3.60" viewBox="0 0 6 4"><path d="M0 0.5H5.5L2.75 3.5Z" fill="#111"/></svg>
<svg class="a" style="left:366.70px;top:38.60px;" width="10.00" height="10.00" viewBox="0 0 16 16"><rect x="2" y="2" width="12" height="12" rx="1" fill="#dcdcdc" stroke="#cfcfcf"/><rect x="4.5" y="2.5" width="7" height="4" fill="#f0f0f0"/><rect x="5" y="9" width="6" height="5" fill="#ececec"/></svg>
<svg class="a" style="left:381.00px;top:38.60px;" width="10.00" height="10.00" viewBox="0 0 16 16"><rect x="4" y="1" width="11" height="11" rx="1" fill="#e4e4e4" stroke="#d4d4d4"/><rect x="1" y="4" width="11" height="11" rx="1" fill="#dadada" stroke="#cdcdcd"/><rect x="3.5" y="10" width="6" height="5" fill="#ececec"/></svg>
<div class="a" style="left:395px;top:37.5px;width:1px;height:11.5px;background:#a9adb8"></div>
<svg class="a" style="left:401.00px;top:38.60px;" width="10.00" height="10.00" viewBox="0 0 16 16"><circle cx="8" cy="8.5" r="5.8" fill="none" stroke="#3c82b8" stroke-width="2.2" stroke-dasharray="2 1"/><circle cx="8" cy="8.5" r="3.2" fill="#e8f0f8"/><path d="M6.5 6.5L10 8.5L6.5 10.5Z" fill="#3c82b8"/><path d="M2 1.5L6 5" stroke="#555" stroke-width="1.2"/></svg>
<svg class="a" style="left:414.60px;top:41.30px;" width="5.40" height="3.60" viewBox="0 0 6 4"><path d="M0 0.5H5.5L2.75 3.5Z" fill="#111"/></svg>
<svg class="a" style="left:424.00px;top:38.60px;" width="10.00" height="10.00" viewBox="0 0 16 16"><path d="M6.5 6.5L13.8 13.8" stroke="#7a4a18" stroke-width="3.6" stroke-linecap="round"/><path d="M6.5 6.5L13.8 13.8" stroke="#c98a3e" stroke-width="2" stroke-linecap="round"/><path d="M0.8 5.2L5.2 0.8L7.2 1.2L11.2 5L8 8.4L5.8 6.2L3.2 8.2Z" fill="#6e6e6e"/><path d="M2 5L5.4 1.8L7 2.2L9.8 5" fill="none" stroke="#b4b4b4" stroke-width="0.9"/></svg>
<svg class="a" style="left:438.50px;top:41.30px;" width="5.40" height="3.60" viewBox="0 0 6 4"><path d="M0 0.5H5.5L2.75 3.5Z" fill="#111"/></svg>
<svg class="a" style="left:448.00px;top:38.60px;" width="10.00" height="10.00" viewBox="0 0 16 16"><path d="M2.5 1.5H10L13.5 5V14.5H2.5Z" fill="#f4f4f4" stroke="#b0b0b0"/><path d="M10 1.5V5H13.5" fill="#f0d070" stroke="#c0a040" stroke-width="0.6"/><g fill="#4a6fa5"><rect x="3.5" y="9" width="2.5" height="5"/><rect x="7" y="9" width="2.5" height="5"/><rect x="10.5" y="9" width="2.5" height="5"/></g><g fill="#dde6f0"><rect x="4" y="10" width="1.5" height="1"/><rect x="7.5" y="10" width="1.5" height="1"/><rect x="11" y="10" width="1.5" height="1"/><rect x="4" y="12" width="1.5" height="1"/><rect x="7.5" y="12" width="1.5" height="1"/><rect x="11" y="12" width="1.5" height="1"/></g></svg>
<div class="a" style="left:461.4px;top:38.0px;width:1.3px;height:1.2px;background:#b4b0a6"></div>
<div class="a" style="left:461.4px;top:41.266666666666666px;width:1.3px;height:1.2px;background:#b4b0a6"></div>
<div class="a" style="left:461.4px;top:44.53333333333333px;width:1.3px;height:1.2px;background:#b4b0a6"></div>
<div class="a" style="left:461.4px;top:47.8px;width:1.3px;height:1.2px;background:#b4b0a6"></div>
<svg class="a" style="left:465.20px;top:38.60px;" width="10.00" height="10.00" viewBox="0 0 16 16"><rect x="1" y="1.5" width="14" height="12" rx="2.5" fill="#2a5ea8"/><rect x="3" y="3.5" width="10" height="7" fill="#e9f1fa"/><path d="M5 5.5H8M5 7.5H10" stroke="#555" stroke-width="0.8"/><rect x="5" y="13.5" width="6" height="1.5" fill="#2a5ea8"/></svg>
<div class="a" style="left:478.5px;top:38.0px;width:1.3px;height:1.2px;background:#b4b0a6"></div>
<div class="a" style="left:478.5px;top:41.266666666666666px;width:1.3px;height:1.2px;background:#b4b0a6"></div>
<div class="a" style="left:478.5px;top:44.53333333333333px;width:1.3px;height:1.2px;background:#b4b0a6"></div>
<div class="a" style="left:478.5px;top:47.8px;width:1.3px;height:1.2px;background:#b4b0a6"></div>
<svg class="a" style="left:482.60px;top:38.60px;" width="10.00" height="10.00" viewBox="0 0 16 16"><path d="M1.5 1.5L14.5 14.5" stroke="#2f5c9a" stroke-width="1.6"/><circle cx="8" cy="8" r="3.8" fill="#5a9ad6" stroke="#2f5c9a"/><circle cx="8" cy="8" r="1.5" fill="#cfe3f5"/></svg>
<div class="a" style="left:496.6px;top:37.5px;width:1px;height:11.5px;background:#a9adb8"></div>
<svg class="a" style="left:502.00px;top:38.60px;" width="10.00" height="10.00" viewBox="0 0 16 16"><path d="M2.5 9.5A5 5 0 0 0 12.5 11" fill="none" stroke="#d6d0bb" stroke-width="2.4"/><path d="M8 1.5L14 5.5L8 9.5Z" fill="#a7c2a0"/></svg>
<div class="a" style="left:515.9px;top:38.0px;width:1.3px;height:1.2px;background:#b4b0a6"></div>
<div class="a" style="left:515.9px;top:41.266666666666666px;width:1.3px;height:1.2px;background:#b4b0a6"></div>
<div class="a" style="left:515.9px;top:44.53333333333333px;width:1.3px;height:1.2px;background:#b4b0a6"></div>
<div class="a" style="left:515.9px;top:47.8px;width:1.3px;height:1.2px;background:#b4b0a6"></div>
<svg class="a" style="left:519.70px;top:38.60px;" width="10.00" height="10.00" viewBox="0 0 16 16"><circle cx="6" cy="5.5" r="4.8" fill="#c9782e"/><circle cx="10.5" cy="10.5" r="4.8" fill="#d18536"/><g stroke="#f5d8a0" stroke-width="0.8"><path d="M2 4H10M2 7H10M4.5 1V10M7.5 1V10M6 9H15M6 12H15M9 6V15M12 6V15"/></g></svg>
<div class="a" style="left:533.6px;top:38.0px;width:1.3px;height:1.2px;background:#b4b0a6"></div>
<div class="a" style="left:533.6px;top:41.266666666666666px;width:1.3px;height:1.2px;background:#b4b0a6"></div>
<div class="a" style="left:533.6px;top:44.53333333333333px;width:1.3px;height:1.2px;background:#b4b0a6"></div>
<div class="a" style="left:533.6px;top:47.8px;width:1.3px;height:1.2px;background:#b4b0a6"></div>
<svg class="a" style="left:538.00px;top:38.60px;" width="10.00" height="10.00" viewBox="0 0 16 16"><path d="M1.5 6.5L4 3.5H12L14.5 6.5V14.5H1.5Z" fill="#3f7fd0" stroke="#2b5f9e"/><rect x="3" y="7" width="10" height="6" fill="#a8cbf0"/><text x="8" y="12.8" font-family="Liberation Sans" font-weight="bold" font-size="7" fill="#1e4f9a" text-anchor="middle">C</text><circle cx="12.5" cy="3" r="2.8" fill="#f5d35a" stroke="#c99a1a" stroke-width="0.8"/></svg>
<svg class="a" style="left:551.80px;top:41.30px;" width="5.40" height="3.60" viewBox="0 0 6 4"><path d="M0 0.5H5.5L2.75 3.5Z" fill="#111"/></svg>
<svg class="a" style="left:561.60px;top:38.60px;" width="10.00" height="10.00" viewBox="0 0 16 16"><path d="M3 6L4 3.5H9L10 5H15V14H4Z" fill="#f3c65a" stroke="#c48f1c" stroke-width="0.8"/><circle cx="5" cy="10.5" r="4.2" fill="#4f86d0" stroke="#2b5f9e" stroke-width="0.6"/><text x="5" y="13" font-family="Liberation Sans" font-weight="bold" font-size="6.5" fill="#fff" text-anchor="middle">C</text><circle cx="13" cy="3" r="2.6" fill="#f5d35a" stroke="#c99a1a" stroke-width="0.8"/></svg>
<svg class="a" style="left:575.30px;top:41.30px;" width="5.40" height="3.60" viewBox="0 0 6 4"><path d="M0 0.5H5.5L2.75 3.5Z" fill="#111"/></svg>
<svg class="a" style="left:585.00px;top:38.60px;" width="10.00" height="10.00" viewBox="0 0 16 16"><path d="M2.5 1.5H10L13.5 5V15H2.5Z" fill="#fdfdf8" stroke="#b8b090"/><text x="7.5" y="12.5" font-family="Liberation Sans" font-weight="bold" font-size="8" fill="#2a48c8" text-anchor="middle">C</text><circle cx="12.5" cy="3" r="2.8" fill="#f5d35a" stroke="#c99a1a" stroke-width="0.8"/></svg>
<svg class="a" style="left:598.90px;top:41.30px;" width="5.40" height="3.60" viewBox="0 0 6 4"><path d="M0 0.5H5.5L2.75 3.5Z" fill="#111"/></svg>
<svg class="a" style="left:608.70px;top:38.60px;" width="10.00" height="10.00" viewBox="0 0 16 16"><circle cx="7.5" cy="9" r="6" fill="#2f9a3e" stroke="#1f6f2a" stroke-width="0.8"/><path d="M10 6.5A3.2 3.2 0 1 0 10 11.5" fill="none" stroke="#fff" stroke-width="1.8"/><path d="M7.5 7.5L10.5 9L7.5 10.5Z" fill="#fff"/><circle cx="12.5" cy="3.5" r="2.6" fill="#f5d35a" stroke="#c99a1a" stroke-width="0.8"/></svg>
<svg class="a" style="left:623.00px;top:41.30px;" width="5.40" height="3.60" viewBox="0 0 6 4"><path d="M0 0.5H5.5L2.75 3.5Z" fill="#111"/></svg>
<div class="a" style="left:631.6px;top:38.0px;width:1.3px;height:1.2px;background:#b4b0a6"></div>
<div class="a" style="left:631.6px;top:41.266666666666666px;width:1.3px;height:1.2px;background:#b4b0a6"></div>
<div class="a" style="left:631.6px;top:44.53333333333333px;width:1.3px;height:1.2px;background:#b4b0a6"></div>
<div class="a" style="left:631.6px;top:47.8px;width:1.3px;height:1.2px;background:#b4b0a6"></div>
<svg class="a" style="left:636.00px;top:38.50px;" width="10.00" height="10.00" viewBox="0 0 16 16"><path d="M15.74 9.57L11.32 10.23L12.36 14.58L8.77 11.93L6.43 15.74L5.77 11.32L1.42 12.36L4.07 8.77L0.26 6.43L4.68 5.77L3.64 1.42L7.23 4.07L9.57 0.26L10.23 4.68L14.58 3.64L11.93 7.23Z" fill="#24615e"/><circle cx="8" cy="8" r="4" fill="#3f9a5a"/><circle cx="8" cy="8.3" r="3" fill="#8fd67a"/><circle cx="7.4" cy="7.5" r="1.4" fill="#e4f8d8"/></svg>
<svg class="a" style="left:649.80px;top:41.30px;" width="5.40" height="3.60" viewBox="0 0 6 4"><path d="M0 0.5H5.5L2.75 3.5Z" fill="#111"/></svg>
<svg class="a" style="left:659.60px;top:38.60px;" width="10.00" height="10.00" viewBox="0 0 16 16"><circle cx="8" cy="8" r="7" fill="#2b9a3a" stroke="#1c6e28" stroke-width="0.8"/><circle cx="8" cy="7" r="5.2" fill="#40b44a"/><path d="M6 4.5L11.5 8L6 11.5Z" fill="#fff"/></svg>
<svg class="a" style="left:673.30px;top:41.30px;" width="5.40" height="3.60" viewBox="0 0 6 4"><path d="M0 0.5H5.5L2.75 3.5Z" fill="#111"/></svg>
<svg class="a" style="left:683.00px;top:38.60px;" width="10.00" height="10.00" viewBox="0 0 16 16"><circle cx="7" cy="6" r="5.5" fill="#2b9a3a" stroke="#1c6e28" stroke-width="0.8"/><path d="M5.5 3.5L9.5 6L5.5 8.5Z" fill="#fff"/><circle cx="7" cy="13" r="2.3" fill="none" stroke="#6a9ad6" stroke-width="1.3"/><rect x="11.5" y="10" width="2" height="5.5" fill="#b0c4de"/></svg>
<svg class="a" style="left:697.30px;top:41.30px;" width="5.40" height="3.60" viewBox="0 0 6 4"><path d="M0 0.5H5.5L2.75 3.5Z" fill="#111"/></svg>
<svg class="a" style="left:706.70px;top:38.60px;" width="10.00" height="10.00" viewBox="0 0 16 16"><circle cx="6.5" cy="6" r="5.5" fill="#2b9a3a" stroke="#1c6e28" stroke-width="0.8"/><path d="M5 3.5L9 6L5 8.5Z" fill="#fff"/><rect x="8" y="10.5" width="7.5" height="5" rx="1.5" fill="#e02020"/><rect x="10" y="9" width="3.5" height="2" fill="#e02020"/></svg>
<svg class="a" style="left:721.00px;top:41.30px;" width="5.40" height="3.60" viewBox="0 0 6 4"><path d="M0 0.5H5.5L2.75 3.5Z" fill="#111"/></svg>
<div class="a" style="left:729.6px;top:38.0px;width:1.3px;height:1.2px;background:#b4b0a6"></div>
<div class="a" style="left:729.6px;top:41.266666666666666px;width:1.3px;height:1.2px;background:#b4b0a6"></div>
<div class="a" style="left:729.6px;top:44.53333333333333px;width:1.3px;height:1.2px;background:#b4b0a6"></div>
<div class="a" style="left:729.6px;top:47.8px;width:1.3px;height:1.2px;background:#b4b0a6"></div>
<svg class="a" style="left:734.00px;top:38.60px;" width="10.00" height="10.00" viewBox="0 0 16 16"><path d="M0.5 8L2 6H13L15 8V15H0.5Z" fill="#f2c458" stroke="#c48f1c" stroke-width="0.8"/><path d="M0.5 15L3 10H15.5L13.5 15Z" fill="#f8d77a"/><circle cx="6" cy="4.5" r="3.5" fill="#7a5ab8"/><circle cx="11" cy="6.5" r="3.3" fill="#3aa64a"/></svg>
<svg class="a" style="left:747.50px;top:38.60px;" width="10.00" height="10.00" viewBox="0 0 16 16"><path d="M1 6L2 4H7L8 5H14V14H1Z" fill="#f2c458" stroke="#c48f1c" stroke-width="0.8"/><rect x="4.5" y="3" width="8" height="6" fill="#fff" stroke="#8aa0c0" stroke-width="0.6"/><path d="M1 14L3 8.5H15.5L13.5 14Z" fill="#f8d77a" stroke="#c48f1c" stroke-width="0.6"/></svg>
<svg class="a" style="left:763.00px;top:38.60px;" width="10.00" height="10.00" viewBox="0 0 16 16"><path d="M13.5 1.5L6 9" stroke="#e8c060" stroke-width="3.5" stroke-linecap="round"/><path d="M12.5 2.5L8 7" stroke="#b0b0b0" stroke-width="1.2"/><path d="M5.5 8.5L2 12L1 15L4 14L7.5 10.5Z" fill="#9a9a9a"/><path d="M1.5 14.5L4 12" stroke="#f8f0a0" stroke-width="1.5"/></svg>
<svg class="a" style="left:776.90px;top:41.30px;" width="5.40" height="3.60" viewBox="0 0 6 4"><path d="M0 0.5H5.5L2.75 3.5Z" fill="#111"/></svg>
<div class="a" style="left:785.5px;top:38.0px;width:1.3px;height:1.2px;background:#b4b0a6"></div>
<div class="a" style="left:785.5px;top:41.266666666666666px;width:1.3px;height:1.2px;background:#b4b0a6"></div>
<div class="a" style="left:785.5px;top:44.53333333333333px;width:1.3px;height:1.2px;background:#b4b0a6"></div>
<div class="a" style="left:785.5px;top:47.8px;width:1.3px;height:1.2px;background:#b4b0a6"></div>
<svg class="a" style="left:789.00px;top:38.60px;" width="10.00" height="10.00" viewBox="0 0 16 16"><rect x="1.5" y="1.5" width="12" height="13" fill="#e9eef5" stroke="#c8b88a"/><rect x="3" y="4" width="7" height="7" fill="#b8cce4"/><circle cx="10" cy="10" r="3.5" fill="#e6a824"/><path d="M13 4L15 6V12" stroke="#e6a824" stroke-width="1.5" fill="none"/></svg>
<svg class="a" style="left:803.60px;top:38.60px;" width="10.00" height="10.00" viewBox="0 0 16 16"><rect x="1.5" y="1.5" width="13" height="13" fill="#eef2f6" stroke="#c8b88a"/><rect x="6" y="3" width="4" height="10" rx="2" fill="#7aa2d6"/><path d="M8 4V12" stroke="#d8e6f5" stroke-width="1"/></svg>
<svg class="a" style="left:817.70px;top:38.60px;" width="10.00" height="10.00" viewBox="0 0 16 16"><text x="8" y="13" font-family="Liberation Sans" font-weight="bold" font-size="12" fill="#3a6aa8" text-anchor="middle">¶</text></svg>
<svg class="a" style="left:832.00px;top:38.60px;" width="10.00" height="10.00" viewBox="0 0 16 16"><path d="M14 1L8 8" stroke="#7a7a7a" stroke-width="2"/><path d="M8.5 7.5L3 12L1 15L5 14.5L10 9Z" fill="#f2d21a"/><path d="M1 15L7 11" stroke="#d8a800" stroke-width="1"/></svg>
<svg class="a" style="left:847.00px;top:38.60px;" width="10.00" height="10.00" viewBox="0 0 16 16"><path d="M2 8L6 3L12 6L14 10L9 14L4 12Z" fill="#a0a0a0"/><circle cx="6" cy="7" r="2" fill="#d0d0d0"/><circle cx="10" cy="10" r="2" fill="#d0d0d0"/></svg>
<div class="a" style="left:860.4px;top:38.0px;width:1.3px;height:1.2px;background:#b4b0a6"></div>
<div class="a" style="left:860.4px;top:41.266666666666666px;width:1.3px;height:1.2px;background:#b4b0a6"></div>
<div class="a" style="left:860.4px;top:44.53333333333333px;width:1.3px;height:1.2px;background:#b4b0a6"></div>
<div class="a" style="left:860.4px;top:47.8px;width:1.3px;height:1.2px;background:#b4b0a6"></div>
<svg class="a" style="left:864.50px;top:38.60px;" width="10.00" height="10.00" viewBox="0 0 16 16"><path d="M5 1.5H9V8H12L7 14L2 8H5Z" fill="#f6d06a" stroke="#c9961a" stroke-width="0.9"/><rect x="5.5" y="12.5" width="3" height="3" fill="#3a6ad0"/><rect x="13" y="3" width="1.8" height="12.5" fill="#b8c4d8"/></svg>
<svg class="a" style="left:878.90px;top:41.30px;" width="5.40" height="3.60" viewBox="0 0 6 4"><path d="M0 0.5H5.5L2.75 3.5Z" fill="#111"/></svg>
<svg class="a" style="left:888.00px;top:38.60px;" width="10.00" height="10.00" viewBox="0 0 16 16"><path d="M5 15H9V8.5H12L7 2.5L2 8.5H5Z" fill="#f6d06a" stroke="#c9961a" stroke-width="0.9"/><rect x="5.5" y="0.5" width="3" height="2" fill="#3a6ad0"/><rect x="13" y="1" width="1.8" height="12.5" fill="#b8c4d8"/></svg>
<svg class="a" style="left:902.30px;top:41.30px;" width="5.40" height="3.60" viewBox="0 0 6 4"><path d="M0 0.5H5.5L2.75 3.5Z" fill="#111"/></svg>
<svg class="a" style="left:911.70px;top:38.60px;" width="10.00" height="10.00" viewBox="0 0 16 16"><path d="M1.5 8L7 2.5V5.5H14.5V10.5H7V13.5Z" fill="#f4f4f4" stroke="#c8c8c8" stroke-width="1"/></svg>
<svg class="a" style="left:926.50px;top:38.60px;" width="10.00" height="10.00" viewBox="0 0 16 16"><path d="M1.5 8L7 2.5V5.5H14.5V10.5H7V13.5Z" fill="#fbe6a8" stroke="#d9a326" stroke-width="1.4"/></svg>
<svg class="a" style="left:940.30px;top:41.30px;" width="5.40" height="3.60" viewBox="0 0 6 4"><path d="M0 0.5H5.5L2.75 3.5Z" fill="#111"/></svg>
<svg class="a" style="left:950.50px;top:38.60px;" width="10.00" height="10.00" viewBox="0 0 16 16"><path d="M14.5 8L9 2.5V5.5H1.5V10.5H9V13.5Z" fill="#f6f6f6" stroke="#c8c8c8" stroke-width="1"/></svg>
<svg class="a" style="left:964.20px;top:41.30px;" width="5.40" height="3.60" viewBox="0 0 6 4"><path d="M0 0.5H5.5L2.75 3.5Z" fill="#777"/></svg>
<div class="a" style="left:973.5px;top:37.5px;width:1px;height:11.5px;background:#a9adb8"></div>
<svg class="a" style="left:978.30px;top:38.60px;" width="10.00" height="10.00" viewBox="0 0 16 16"><rect x="1.5" y="3.5" width="12" height="11" fill="#f4f8fc" stroke="#b8a878"/><rect x="2" y="4" width="11" height="2.5" fill="#5a9ad6"/><path d="M8 9L14 2" stroke="#2aa040" stroke-width="2.4"/><path d="M7 10L8 8.5" stroke="#333" stroke-width="1"/></svg>
<div class="a" style="left:873px;top:57px;width:60px;height:13px;border:1px solid #a9a9a9;background:#fff"></div>
<div class="a t" style="left:876.6px;top:58.59px;font-size:8.4px;color:#555;-webkit-text-stroke:0;transform:scaleX(0.93)">Quick Access</div>
<div class="a" style="left:937.6px;top:57.0px;width:1.3px;height:1.2px;background:#b4b0a6"></div>
<div class="a" style="left:937.6px;top:60.766666666666666px;width:1.3px;height:1.2px;background:#b4b0a6"></div>
<div class="a" style="left:937.6px;top:64.53333333333333px;width:1.3px;height:1.2px;background:#b4b0a6"></div>
<div class="a" style="left:937.6px;top:68.3px;width:1.3px;height:1.2px;background:#b4b0a6"></div>
<div class="a" style="left:940px;top:54px;width:57px;height:20px;background:#e6eaf7;border-left:1px solid #d6dbea;border-top:1px solid #d6dbea;border-radius:3px 0 0 0"></div>
<svg class="a" style="left:945.50px;top:58.50px;" width="10.00" height="10.00" viewBox="0 0 16 16"><rect x="1.5" y="4.5" width="11" height="10" fill="#f6f1de" stroke="#b8a070" stroke-width="0.9"/><rect x="2" y="5" width="10" height="2.2" fill="#4a8ad0"/><path d="M2 10.5H12M6.5 7.2V14.5" stroke="#7aa0c8" stroke-width="1"/><path d="M12.5 0.8L15.2 3.5L12.5 6.2L9.8 3.5Z" fill="#f5d35a" stroke="#c99a1a" stroke-width="0.8"/></svg>
<div class="a" style="left:960px;top:58px;width:1px;height:11px;background:#a9adb8"></div>
<div class="a" style="left:963.5px;top:57.4px;width:14.5px;height:13.5px;background:#cce4fb;border:1px solid #a6cdf2"></div>
<svg class="a" style="left:965.70px;top:59.00px;" width="10.00" height="10.00" viewBox="0 0 16 16"><rect x="1.5" y="1.5" width="9" height="11" fill="#eef2f8" stroke="#8a8060" stroke-width="0.8"/><rect x="2" y="2" width="8" height="2.2" fill="#3a7ac8"/><path d="M4.5 4.2V12" stroke="#8aa0c0" stroke-width="0.9"/><rect x="7" y="7" width="8" height="8.5" rx="1" fill="#f4f0e4" stroke="#b09860" stroke-width="0.9"/><text x="11" y="14" font-family="Liberation Sans" font-weight="bold" font-size="7.5" fill="#2a52b8" text-anchor="middle">C</text></svg>
<svg class="a" style="left:980.75px;top:58.75px;" width="10.50" height="10.50" viewBox="0 0 16 16"><path d="M15.74 9.57L11.32 10.23L12.36 14.58L8.77 11.93L6.43 15.74L5.77 11.32L1.42 12.36L4.07 8.77L0.26 6.43L4.68 5.77L3.64 1.42L7.23 4.07L9.57 0.26L10.23 4.68L14.58 3.64L11.93 7.23Z" fill="#24615e"/><circle cx="8" cy="8" r="4" fill="#3f9a5a"/><circle cx="8" cy="8.3" r="3" fill="#8fd67a"/><circle cx="7.4" cy="7.5" r="1.4" fill="#e4f8d8"/></svg>
<div class="a" style="left:997px;top:0px;width:1px;height:589px;background:#5a5a5a"></div>

</body></html>
